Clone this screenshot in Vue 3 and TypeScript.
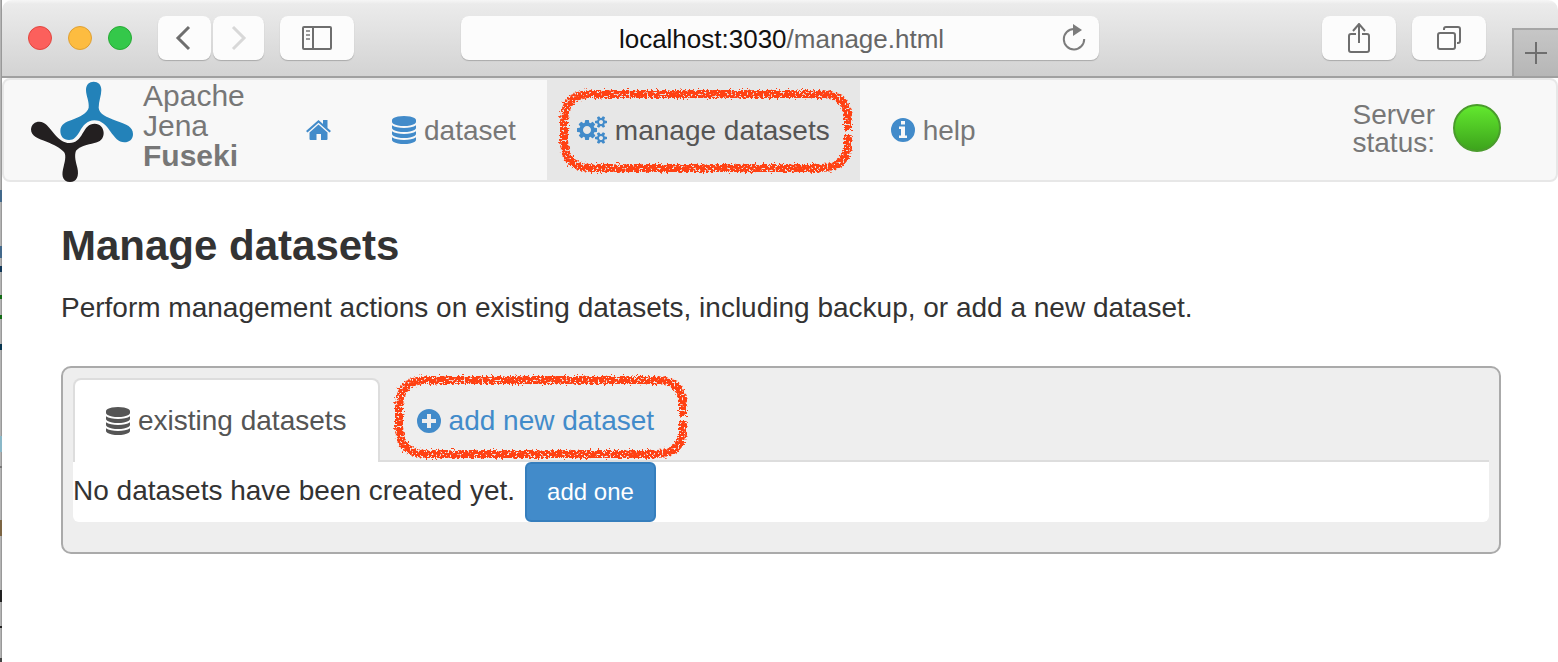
<script setup lang="ts">
import { ref } from 'vue'

const gear =
  'M896 896q0-106-75-181t-181-75-181 75-75 181 75 181 181 75 181-75 75-181zm768 512q0-52-38-90t-90-38-90 38-38 90q0 53 37.5 90.5t90.5 37.5 90.5-37.5 37.5-90.5zm0-1024q0-52-38-90t-90-38-90 38-38 90q0 53 37.5 90.5t90.5 37.5 90.5-37.5 37.5-90.5zm-384 421v185q0 10-7 19.5t-16 10.5l-155 24q-11 35-32 76 34 48 90 115 7 11 7 20 0 12-7 19-23 30-82.5 89.5t-78.5 59.5q-11 0-21-7l-115-90q-37 19-77 31-11 108-23 155-7 24-30 24h-186q-11 0-20-7.5t-10-17.5l-23-153q-34-10-75-31l-118 89q-7 7-20 7-11 0-21-8-144-133-144-160 0-9 7-19 10-14 41-53t47-61q-23-44-35-82l-152-24q-10-1-17-9.5t-7-19.5v-185q0-10 7-19.5t16-10.5l155-24q11-35 32-76-34-48-90-115-7-11-7-20 0-12 7-20 22-30 82-89t79-59q11 0 21 7l115 90q34-18 77-32 11-108 23-154 7-24 30-24h186q11 0 20 7.5t10 17.5l23 153q34 10 75 31l118-89q8-7 20-7 11 0 21 8 144 133 144 160 0 8-7 19-12 16-42 54t-45 60q23 48 34 82l152 23q10 2 17 10.5t7 19.5zm640 533v140q0 16-149 31-12 27-30 52 51 113 51 138 0 4-4 7-122 71-124 71-8 0-46-47t-52-68q-20 2-30 2t-30-2q-14 21-52 68t-46 47q-2 0-124-71-4-3-4-7 0-25 51-138-18-25-30-52-149-15-149-31v-140q0-16 149-31 13-29 30-52-51-113-51-138 0-4 4-7 4-2 35-20t59-34 30-16q8 0 46 46.5t52 67.5q20-2 30-2t30 2q51-71 92-112l6-2q4 0 124 70 4 3 4 7 0 25-51 138 17 23 30 52 149 15 149 31zm0-1024v140q0 16-149 31-12 27-30 52 51 113 51 138 0 4-4 7-122 71-124 71-8 0-46-47t-52-68q-20 2-30 2t-30-2q-14 21-52 68t-46 47q-2 0-124-71-4-3-4-7 0-25 51-138-18-25-30-52-149-15-149-31v-140q0-16 149-31 13-29 30-52-51-113-51-138 0-4 4-7 4-2 35-20t59-34 30-16q8 0 46 46.5t52 67.5q20-2 30-2t30 2q51-71 92-112l6-2q4 0 124 70 4 3 4 7 0 25-51 138 17 23 30 52 149 15 149 31z'
const disks =
  'M768 768q237 0 443-43t325-127v170q0 69-103 128t-280 93.5-385 34.5-385-34.5-280-93.5-103-128v-170q119 84 325 127t443 43zm0 768q237 0 443-43t325-127v170q0 69-103 128t-280 93.5-385 34.5-385-34.5-280-93.5-103-128v-170q119 84 325 127t443 43zm0-384q237 0 443-43t325-127v170q0 69-103 128t-280 93.5-385 34.5-385-34.5-280-93.5-103-128v-170q119 84 325 127t443 43zm0-1152q208 0 385 34.5t280 93.5 103 128v128q0 69-103 128t-280 93.5-385 34.5-385-34.5-280-93.5-103-128v-128q0-69 103-128t280-93.5 385-34.5z'
const outline =
  'M293 44V34Q293 8 266 8H36Q9 8 9 36V54Q9 82 36 82H266Q293 82 293 56V48'

interface NavItem {
  id: string
  label: string
  box: string
  width: number
  height: number
  path: string
}

const navItems: NavItem[] = [
  {
    id: 'home', label: '', box: '0 0 25 20', width: 25, height: 20,
    path: 'M12.5 0L17 4V0H21.500V8L25 11L23.500 12.500L12.500 2.700L1.500 12.500L0 11ZM12.500 4.500L21.500 12.500V19Q21.500 20 20.500 20H15V14H10.500V20H4.500Q3.500 20 3.500 19V12.500Z',
  },
  { id: 'dataset', label: 'dataset', box: '0 0 1536 1792', width: 24, height: 28, path: disks },
  { id: 'manage', label: 'manage datasets', box: '0 0 1920 1792', width: 30, height: 28, path: gear },
  {
    id: 'help', label: 'help', box: '0 0 24 24', width: 24, height: 24,
    path: 'M12 0a12 12 0 1 1 0 24a12 12 0 1 1 0-24ZM10 3V6.500H14V3ZM8 8.500V11H10V17.500H8V20H16V17.500H14V8.500Z',
  },
]
const currentPage = ref('manage')
const currentTab = ref('existing')
</script>

<template>
  <div class="window">
    <svg class="defs" aria-hidden="true">
      <filter id="crayon" x="-5%" y="-10%" width="110%" height="120%" color-interpolation-filters="sRGB">
        <feTurbulence type="fractalNoise" baseFrequency="0.5" numOctaves="3" seed="8" result="noise" />
        <feDisplacementMap in="SourceGraphic" in2="noise" scale="8" xChannelSelector="R" yChannelSelector="G" result="rough" />
        <feColorMatrix in="noise" type="matrix" values="0 0 0 0 0  0 0 0 0 0  0 0 0 0 0  0 0 -9 0 6.2" result="grain" />
        <feComposite in="rough" in2="grain" operator="in" />
      </filter>
    </svg>

    <header class="toolbar">
      <div class="side">
        <div class="lights">
          <button class="light close" aria-label="Close"></button>
          <button class="light minimize" aria-label="Minimize"></button>
          <button class="light expand" aria-label="Zoom"></button>
        </div>
        <div class="history">
          <button class="tool back" aria-label="Back">
            <svg width="20" height="26" viewBox="0 0 20 26"><path d="M14 2L3 13L14 24" fill="none" stroke="#6e6e6e" stroke-width="3" /></svg>
          </button>
          <button class="tool forward" aria-label="Forward" disabled>
            <svg width="16" height="26" viewBox="0 0 16 26"><path d="M2 2L13 13L2 24" fill="none" stroke="#d8d8d8" stroke-width="3" /></svg>
          </button>
        </div>
        <button class="tool" aria-label="Show sidebar">
          <svg width="30" height="24" viewBox="0 0 30 24">
            <rect x="1" y="1" width="28" height="22" rx="1" fill="none" stroke="#6e6e6e" stroke-width="2" />
            <path d="M11 1V23" stroke="#6e6e6e" stroke-width="2" />
            <path d="M4 5H8M4 9H8M4 13H8" stroke="#999" stroke-width="2" />
          </svg>
        </button>
      </div>
      <div class="address">
        <a class="url" href="#">localhost:3030<span>/manage.html</span></a>
        <button class="reload" aria-label="Reload">
          <svg width="24" height="28" viewBox="0 0 24 28">
            <path d="M12 5A10.200 10.200 0 1 0 22.200 15" fill="none" stroke="#7c7c7c" stroke-width="2" />
            <path d="M11 0L20 6L11 12Z" fill="#7c7c7c" />
          </svg>
        </button>
      </div>
      <div class="side right">
        <button class="tool" aria-label="Share">
          <svg width="22" height="30" viewBox="0 0 22 30" fill="none" stroke="#6e6e6e" stroke-width="2">
            <path d="M8 11H3Q1 11 1 13V27Q1 29 3 29H19Q21 29 21 27V13Q21 11 19 11H14M11 20V2M5 8L11 1L17 8" />
          </svg>
        </button>
        <button class="tool" aria-label="Show all tabs">
          <svg width="24" height="24" viewBox="0 0 24 24" fill="none" stroke="#6e6e6e" stroke-width="2">
            <rect x="1" y="7" width="17" height="16" rx="2" />
            <path d="M7 4V3Q7 1 9 1H21Q23 1 23 3V15Q23 17 21 17H20" />
          </svg>
        </button>
        <button class="new-tab" aria-label="New tab">
          <svg width="22" height="22" viewBox="0 0 22 22"><path d="M11 0V22M0 11H22" stroke="#6e6e6e" stroke-width="2" /></svg>
        </button>
      </div>
    </header>

    <nav class="navbar">
      <a class="brand" href="#">
        <svg width="105" height="103" viewBox="90 15 315 309">
          <path fill="#2382b9" d="M258 42C258 25 268 17 281 17C294 17 304 25 304 42C304 60 296 75 296 95C298 115 318 122 350 135C380 146 399 152 399 174C399 190 388 199 373 199C355 199 345 185 330 165C318 148 305 133 283 133C262 133 248 150 240 165C230 182 222 192 207 192C190 192 181 180 181 165C181 145 198 138 215 132C240 122 262 112 266 95C268 75 258 60 258 42Z" />
          <path fill="#231f20" d="M93 160C94 145 105 137 118 137C136 137 145 152 160 170C175 188 190 201 209 201C228 201 238 190 248 172C258 155 266 143 284 143C300 143 311 155 311 171C311 188 300 198 283 201C262 206 240 211 228 224C222 240 228 258 232 275C238 300 230 318 210 318C190 318 184 302 189 280C194 258 200 240 192 228C180 214 160 206 140 197C115 188 93 182 93 160Z" />
        </svg>
        <span class="brand-name">Apache<br />Jena<br /><strong>Fuseki</strong></span>
      </a>
      <ul class="links">
        <li v-for="item in navItems" :key="item.id">
          <a
            href="#"
            :class="{ active: item.id === currentPage }"
            :aria-label="item.label || 'home'"
            @click.prevent="currentPage = item.id"
          >
            <svg :width="item.width" :height="item.height" :viewBox="item.box" fill="#428bca" fill-rule="evenodd"><path :d="item.path" /></svg>
            <span v-if="item.label">{{ item.label }}</span>
            <svg v-if="item.id === 'manage'" class="mark" width="302" height="90" viewBox="0 0 302 90">
              <path :d="outline" fill="none" stroke="#ff4113" stroke-width="8" filter="url(#crayon)" />
            </svg>
          </a>
        </li>
      </ul>
      <div class="status">
        <span>Server<br />status:</span>
        <i class="lamp"></i>
      </div>
    </nav>

    <main>
      <h1>Manage datasets</h1>
      <p class="lead">Perform management actions on existing datasets, including backup, or add a new dataset.</p>
      <section class="panel">
        <div class="tabs" role="tablist">
          <button role="tab" class="tab" :class="{ current: currentTab === 'existing' }" :aria-selected="currentTab === 'existing'" @click="currentTab = 'existing'">
            <svg width="24" height="28" viewBox="0 0 1536 1792" fill="currentColor"><path :d="disks" /></svg>
            <span>existing datasets</span>
          </button>
          <button role="tab" class="tab" :class="{ current: currentTab === 'new' }" :aria-selected="currentTab === 'new'" @click="currentTab = 'new'">
            <svg width="24" height="24" viewBox="0 0 24 24" fill="currentColor" fill-rule="evenodd">
              <path d="M12 0a12 12 0 1 1 0 24a12 12 0 1 1 0-24ZM10 5V10H5V14H10V19H14V14H19V10H14V5Z" />
            </svg>
            <span>add new dataset</span>
            <svg class="mark" width="302" height="90" viewBox="0 0 302 90">
              <path :d="outline" fill="none" stroke="#ff4113" stroke-width="8" filter="url(#crayon)" />
            </svg>
          </button>
        </div>
        <div class="tab-content">
          <span>No datasets have been created yet.</span>
          <button class="primary" @click="currentTab = 'new'">add one</button>
        </div>
      </section>
    </main>
  </div>
</template>

<style>
body {
  margin: 0;
  background: #fff;
}
</style>

<style scoped>
.window {
  box-sizing: border-box;
  min-height: 100vh;
  padding-left: 2px;
  overflow: hidden;
  font-family: "Liberation Sans", Arial, sans-serif;
  font-size: 28px;
  line-height: 40px;
  color: #333;
  background:
    linear-gradient(#43698b, #43698b) 0 190px / 2px 12px no-repeat,
    linear-gradient(#43698b, #43698b) 0 246px / 2px 12px no-repeat,
    linear-gradient(#123858, #123858) 0 266px / 2px 6px no-repeat,
    linear-gradient(#126b14, #126b14) 0 295px / 2px 4px no-repeat,
    linear-gradient(#126b14, #126b14) 0 315px / 2px 4px no-repeat,
    linear-gradient(#06344f, #06344f) 0 344px / 2px 6px no-repeat,
    linear-gradient(#8ab8c8, #8ab8c8) 0 436px / 2px 16px no-repeat,
    linear-gradient(#777, #777) 0 466px / 2px 2px no-repeat,
    linear-gradient(#7c6544, #7c6544) 0 520px / 2px 16px no-repeat,
    linear-gradient(#222, #222) 0 590px / 2px 12px no-repeat,
    linear-gradient(#222, #222) 0 626px / 2px 2px no-repeat,
    linear-gradient(#444, #444) 0 658px / 2px 4px no-repeat,
    linear-gradient(90deg, #b4b4b4 1px, #999 1px) 0 0 / 2px 100% no-repeat,
    #fff;
}
.defs {
  position: absolute;
  width: 0;
  height: 0;
}
svg {
  display: block;
  flex: none;
}
button {
  font: inherit;
  margin: 0;
  padding: 0;
  border: 0;
  background: none;
}
a {
  color: inherit;
  text-decoration: none;
}

.toolbar {
  box-sizing: border-box;
  display: flex;
  align-items: center;
  height: 78px;
  border-bottom: 2px solid #a0a0a0;
  border-radius: 10px 10px 0 0;
  background: linear-gradient(#f6f6f6, #ebebeb 4px, #d3d3d3);
}
.side {
  display: flex;
  flex: 1;
  align-items: center;
  align-self: stretch;
  gap: 16px;
}
.right {
  justify-content: flex-end;
}
.lights {
  display: flex;
  gap: 16px;
  padding: 0 10px 0 26px;
}
.light {
  box-sizing: border-box;
  width: 24px;
  height: 24px;
  border: 1px solid;
  border-radius: 50%;
}
.close { background: #fc605c; border-color: #e2463f; }
.minimize { background: #fdbc40; border-color: #dfa033; }
.expand { background: #34c84a; border-color: #27aa35; }
.history {
  display: flex;
  gap: 2px;
}
.tool {
  display: flex;
  align-items: center;
  justify-content: center;
  width: 74px;
  height: 44px;
  border-radius: 8px;
  background: #fcfcfc;
  box-shadow: 0 1px 1px #aaa;
}
.back { width: 53px; }
.forward { width: 51px; }
.address {
  display: flex;
  flex: 0 0 41%;
  align-items: center;
  height: 44px;
  border-radius: 8px;
  background: #fcfcfc;
  box-shadow: 0 1px 1px #aaa;
}
.url {
  flex: 1;
  padding: 2px 0 0 40px;
  text-align: center;
  font-size: 26px;
  color: #111;
}
.url span { color: #666; }
.reload { padding-right: 13px; }
.new-tab {
  box-sizing: border-box;
  display: flex;
  align-items: center;
  justify-content: center;
  align-self: flex-end;
  width: 46px;
  height: 48px;
  margin-left: 10px;
  border-top: 2px solid #a6a6a6;
  border-left: 2px solid #a0a0a0;
  background: linear-gradient(#c6c6c6, #b6b6b6);
}

.navbar {
  box-sizing: border-box;
  display: flex;
  height: 104px;
  border: 2px solid #e7e7e7;
  border-radius: 8px;
  background: #f8f8f8;
  color: #777;
}
.brand {
  display: flex;
  gap: 8px;
  width: 246px;
  padding: 1px 0 0 26px;
}
.brand-name {
  font-size: 30px;
  line-height: 30px;
}
.links {
  display: flex;
  gap: 1px;
  margin: 0;
  padding: 0;
  list-style: none;
}
.links a {
  position: relative;
  box-sizing: border-box;
  display: flex;
  align-items: center;
  gap: 8px;
  height: 100%;
  padding: 0 30px;
}
.links span {
  padding-top: 2px;
}
.links a.active {
  background: #e7e7e7;
  color: #555;
}
.mark {
  position: absolute;
  top: 6px;
  left: 8px;
  pointer-events: none;
}
.tab .mark {
  top: -8px;
  left: 4px;
}
.status {
  display: flex;
  gap: 18px;
  margin-left: auto;
  padding: 21px 55px 0 0;
  line-height: 28px;
}
.lamp {
  box-sizing: border-box;
  width: 48px;
  height: 48px;
  margin-top: 3px;
  border: 2px solid #4a9c2c;
  border-radius: 50%;
  background: linear-gradient(#62e82e, #3da41c);
}

main {
  padding: 40px 57px 0 59px;
}
h1 {
  margin: 0;
  font-size: 42px;
  line-height: 48px;
}
.lead {
  margin: 18px 0 38px;
}
.panel {
  padding: 10px 10px 30px;
  border: 2px solid #aaa;
  border-radius: 10px;
  background: #eee;
}
.tabs {
  display: flex;
  gap: 4px;
  border-bottom: 2px solid #ddd;
}
.tab {
  position: relative;
  display: flex;
  align-items: center;
  gap: 8px;
  height: 84px;
  margin-bottom: -2px;
  padding: 0 31px;
  border: 2px solid transparent;
  border-bottom: 0;
  border-radius: 8px 8px 0 0;
  color: #428bca;
}
.tab.current {
  border-color: #ddd;
  background: #fff;
  color: #555;
}
.tab-content {
  display: flex;
  gap: 10px;
  border-radius: 0 0 6px 6px;
  background: #fff;
  line-height: 58px;
}
.primary {
  height: 60px;
  padding: 0 20px;
  border: 2px solid #357ebd;
  border-radius: 6px;
  background: #428bca;
  color: #fff;
  font-size: 24px;
  line-height: 56px;
}
</style>
